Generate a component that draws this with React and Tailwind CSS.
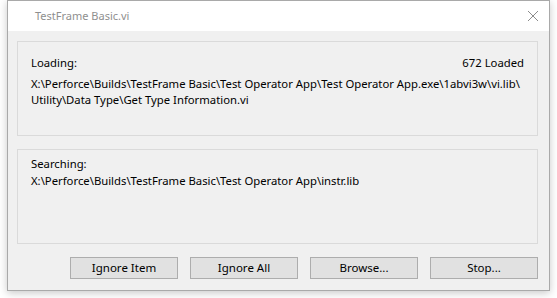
export default function App() {
  const font = { fontFamily: '"Noto Sans", "Open Sans", Arial, sans-serif' };
  const buttons = ["Ignore Item", "Ignore All", "Browse...", "Stop..."];

  return (
    <div className="w-[557px] h-[298px] bg-white pl-[7px] overflow-hidden" style={font}>
      <div className="w-[543px] h-[291px] border border-[#a9a9a9] bg-[#f0f0f0] shadow-[0_2px_8px_rgba(0,0,0,0.22)] flex flex-col">
        {/* title bar */}
        <div className="h-[30px] bg-white flex items-center justify-between pl-[27px] pr-[9px]">
          <span className="text-[11px] text-[#8f8f8f]">TestFrame Basic.vi</span>
          <svg width="12" height="12" viewBox="0 0 12 12" className="mr-[1px]">
            <path d="M1 1 L11 11 M11 1 L1 11" stroke="#8c8c8c" strokeWidth="1" fill="none" />
          </svg>
        </div>

        <div className="flex flex-col pl-[9px] pt-[10px]">
          <div className="w-[521px] h-[95px] border border-[#dadada] px-[13px] pt-[13px] text-[11.3px] text-black">
            <div className="flex justify-between leading-[16px]">
              <span>Loading:</span>
              <span>672 Loaded</span>
            </div>
            <div className="mt-[5px] leading-[16px] whitespace-nowrap">
              X:\Perforce\Builds\TestFrame Basic\Test Operator App\Test Operator App.exe\1abvi3w\vi.lib\
              <br />
              Utility\Data Type\Get Type Information.vi
            </div>
          </div>

          <div className="mt-[13px] w-[521px] h-[95px] border border-[#dadada] px-[13px] pt-[6px] text-[11.3px] text-black leading-[16px]">
            <div>Searching:</div>
            <div className="mt-[1px] whitespace-nowrap">X:\Perforce\Builds\TestFrame Basic\Test Operator App\instr.lib</div>
          </div>

          <div className="mt-[13px] w-[521px] flex justify-end gap-[12px]">
            {buttons.map((b) => (
              <button
                key={b}
                className="w-[108px] h-[22px] border border-[#adadad] bg-[#e1e1e1] text-[11.5px] text-black leading-none"
              >
                {b}
              </button>
            ))}
          </div>
        </div>
      </div>
    </div>
  );
}
